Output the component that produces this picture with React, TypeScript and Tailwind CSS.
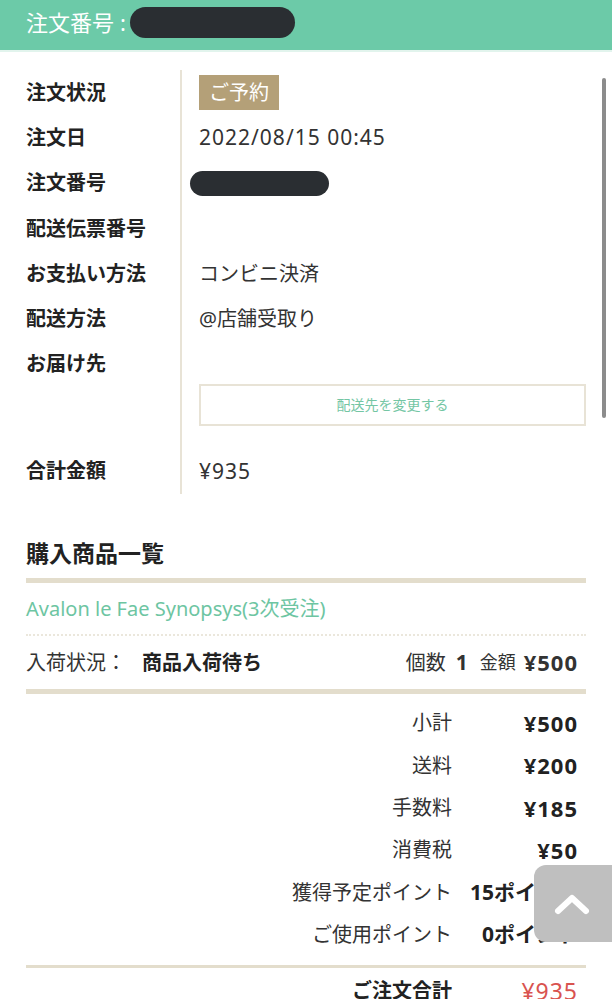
import React from "react";

const font = { fontFamily: '"Noto Sans", "Noto Sans CJK JP", sans-serif' };

type Row = { label: string; value?: React.ReactNode };

const rows: Row[] = [
  {
    label: "注文状況",
    value: (
      <span className="inline-flex h-[35px] items-center bg-[#b4a078] px-[10px] text-[20px] text-white">
        ご予約
      </span>
    ),
  },
  { label: "注文日", value: <span className="text-[21px] tracking-[1px]">2022/08/15 00:45</span> },
  {
    label: "注文番号",
    value: <span className="-ml-[9px] block h-[25px] w-[139px] rounded-full bg-[#2a2e32]" />,
  },
  { label: "配送伝票番号" },
  { label: "お支払い方法", value: "コンビニ決済" },
  { label: "配送方法", value: "@店舗受取り" },
];

const summary = [
  { label: "小計", value: "¥500", point: false },
  { label: "送料", value: "¥200", point: false },
  { label: "手数料", value: "¥185", point: false },
  { label: "消費税", value: "¥50", point: false },
  { label: "獲得予定ポイント", value: "15ポイント", point: true },
  { label: "ご使用ポイント", value: "0ポイント", point: true },
];

function InfoRow({ label, children }: { label: string; children?: React.ReactNode }) {
  return (
    <div className="flex h-[45.3px]">
      <div className="flex w-[156px] shrink-0 items-center border-r-2 border-[#e8e3d6] text-[20px] font-bold text-[#222]">
        {label}
      </div>
      <div className="flex items-center pl-[17px] text-[20px] text-[#333]">{children}</div>
    </div>
  );
}

export default function App() {
  return (
    <div className="relative h-[999px] w-[612px] overflow-hidden bg-white" style={font}>
      {/* header */}
      <div className="flex h-[52px] items-center border-b-2 border-[#e2f4ed] bg-[#6ccaa8] px-[26px] pb-[6px] text-[22px] text-white">
        <span>注文番号</span>
        <span className="ml-[6px]">:</span>
        <span className="ml-[4px] block h-[31px] w-[165px] rounded-full bg-[#2a2e32]" />
      </div>

      <div className="px-[26px]">
        {/* order info */}
        <div className="pt-[18px]">
          {rows.map((r) => (
            <InfoRow key={r.label} label={r.label}>
              {r.value}
            </InfoRow>
          ))}
          <div className="flex">
            <div className="w-[156px] shrink-0 border-r-2 border-[#e8e3d6]">
              <div className="flex h-[45.3px] items-center text-[20px] font-bold text-[#222]">お届け先</div>
            </div>
            <div className="flex-1 pb-[23px] pl-[17px] pt-[42px]">
              <button className="flex h-[42px] w-full items-center justify-center border-2 border-[#e8e3d6] bg-white text-[14px] text-[#74c6a4]">
                配送先を変更する
              </button>
            </div>
          </div>
          <InfoRow label="合計金額">
            <span className="text-[21px] tracking-[1px]">¥935</span>
          </InfoRow>
        </div>

        {/* items */}
        <h2 className="mt-[44px] text-[23px] font-bold leading-[30px] text-[#222]">購入商品一覧</h2>
        <div className="mt-[10px] h-[5px] bg-[#e3ddcc]" />
        <div className="flex h-[53px] items-center border-b-2 border-dotted border-[#ebe7dc] text-[20px] text-[#6dc5a2]">
          Avalon le Fae Synopsys(3次受注)
        </div>
        <div className="flex h-[53px] items-center text-[#333]">
          <span className="text-[20px]">入荷状況：</span>
          <span className="ml-[16px] text-[20px] font-bold text-[#222]">商品入荷待ち</span>
          <span className="ml-auto text-[20px]">個数</span>
          <span className="ml-[10px] text-[21px] font-bold">1</span>
          <span className="ml-[12px] text-[18px]">金額</span>
          <span className="ml-[8px] mr-[8px] text-[22px] font-bold tracking-[1px]">¥500</span>
        </div>
        <div className="h-[5px] bg-[#e3ddcc]" />

        {/* summary */}
        <div className="pt-[8px]">
          {summary.map((s) => (
            <div key={s.label} className="flex h-[42.4px] items-center justify-end text-[#333]">
              <span className="mr-[8px] whitespace-nowrap text-[20px]">{s.label}</span>
              <span
                className={
                  s.point
                    ? "flex w-[126px] justify-end whitespace-nowrap pr-[8px] text-[21px] font-bold text-[#222]"
                    : "flex w-[126px] justify-end whitespace-nowrap pr-[8px] text-[22px] font-bold tracking-[1px] text-[#222]"
                }
              >
                {s.value}
              </span>
            </div>
          ))}
        </div>
        <div className="mt-[9px] h-[3px] bg-[#e3ddcc]" />
        <div className="flex h-[46px] items-center justify-end">
          <span className="mr-[8px] text-[20px] font-bold text-[#222]">ご注文合計</span>
          <span className="w-[126px] pr-[8px] text-right text-[23px] tracking-[1px] text-[#d9534f]">¥935</span>
        </div>
      </div>

      {/* overlay scrollbar */}
      <div className="absolute left-[602px] top-[78px] h-[340px] w-[4px] rounded-full bg-[#8c8c8c]" />

      {/* back to top */}
      <div className="absolute left-[534px] top-[865px] flex h-[77px] w-[90px] items-center rounded-l-[12px] bg-[#bfbfbf] pl-[20px]">
        <svg width="36" height="24" viewBox="0 0 36 24" fill="none">
          <path d="M4 19 L18 6 L32 19" stroke="white" strokeWidth="6" strokeLinecap="round" strokeLinejoin="round" />
        </svg>
      </div>
    </div>
  );
}
